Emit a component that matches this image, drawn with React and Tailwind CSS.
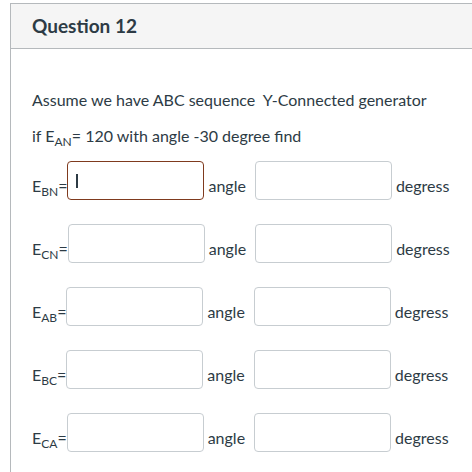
import React from "react";

const font = { fontFamily: "Lato, 'Noto Sans', sans-serif" };

function Row({ sub, focused, top }) {
  return (
    <div className={`flex items-center h-[39px] ${top}`}>
      <span className="mt-[11px] whitespace-nowrap leading-[20px]">
        E<sub className="text-[12px] leading-none align-[-1px]">{sub}</sub>=
      </span>
      <div
        className={`w-[137px] h-[39px] shrink-0 rounded-[4px] border bg-white flex items-center pl-[8px] ${
          focused ? "border-[#7f3a1e]" : "border-[#c7cdd1]"
        }`}
      >
        {focused && <div className="w-[1.5px] h-[14px] bg-[#2d3b45]" />}
      </div>
      <span className="mt-[11px] ml-[4px] leading-[20px]">angle</span>
      <div className="ml-[9px] w-[137px] h-[39px] shrink-0 rounded-[4px] border border-[#c7cdd1] bg-white" />
      <span className="mt-[11px] ml-[4px] leading-[20px]">degress</span>
    </div>
  );
}

export default function App() {
  return (
    <div className="w-[472px] h-[472px] overflow-hidden bg-white text-[#2d3b45]" style={font}>
      <div className="pt-[3px] pl-[10px]">
        <div className="w-[520px] border-l border-t border-[#b5b9bc] h-[480px]">
          <div className="h-[45px] bg-[#f5f5f5] border-b border-[#b5b9bc] flex items-center pl-[21px]">
            <span className="font-bold text-[19px] leading-none -mt-[2px]">Question 12</span>
          </div>
          <div className="pl-[21px] text-[16px]">
            <p className="mt-[41px] leading-[20px]">Assume we have ABC sequence&nbsp; Y-Connected generator</p>
            <p className="mt-[16px] leading-[20px]">
              if E<sub className="text-[12px] leading-none align-[-1px]">AN</sub>= 120 with angle -30 degree find
            </p>
            <Row sub="BN" focused top="mt-[15px]" />
            <Row sub="CN" top="mt-[24px]" />
            <Row sub="AB" top="mt-[24px]" />
            <Row sub="BC" top="mt-[24px]" />
            <Row sub="CA" top="mt-[24px]" />
          </div>
        </div>
      </div>
    </div>
  );
}
